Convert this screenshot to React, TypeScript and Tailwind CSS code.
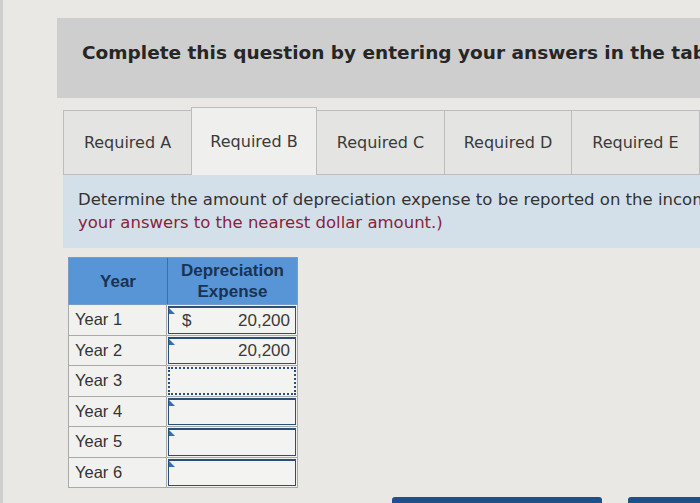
import React from "react";

const tabs = ["Required A", "Required B", "Required C", "Required D", "Required E"];
const tabWidths = ["w-[129px]", "w-[126px]", "w-[129px]", "w-[128px]", "w-[129px]"];

type Row = { year: string; value?: string; dollar?: boolean; focused?: boolean };

const rows: Row[] = [
  { year: "Year 1", value: "20,200", dollar: true },
  { year: "Year 2", value: "20,200" },
  { year: "Year 3", focused: true },
  { year: "Year 4" },
  { year: "Year 5" },
  { year: "Year 6" },
];

function Corner() {
  return (
    <span className="absolute left-0 top-0 h-0 w-0 border-l-[6px] border-t-[6px] border-l-[#2f6fb6] border-t-transparent" />
  );
}

export default function App() {
  return (
    <div className="relative flex h-[503px] w-[700px] flex-col overflow-hidden border-l-[3px] border-[#cfcfcd] bg-[#e9e8e5] font-['DejaVu_Sans',sans-serif]">
      {/* question header */}
      <div className="ml-[54px] mt-[18px] h-[80px] shrink-0 overflow-hidden whitespace-nowrap bg-[#cecece] pl-[25px] pt-[23px] text-[18.5px] font-bold leading-[24px] text-[#262626]">
        Complete this question by entering your answers in the tabs below.
      </div>

      {/* tabs */}
      <div className="ml-[60px] mt-[9px] flex h-[68px] shrink-0 items-end">
        {tabs.map((t, i) => (
          <div
            key={t}
            className={
              "flex shrink-0 items-center justify-center border border-[#bcbcbc] text-[16px] text-[#3a3a3a] " +
              tabWidths[i] +
              (i === 1
                ? " h-[68px] border-b-0 bg-[#efefed]"
                : " h-[65px] bg-[#e4e4e2]") +
              (i > 0 ? " -ml-px" : "")
            }
          >
            {t}
          </div>
        ))}
      </div>

      {/* instructions */}
      <div className="ml-[60px] h-[73px] shrink-0 overflow-hidden whitespace-nowrap bg-[#d3e0ea] pl-[15px] pt-[13px] text-[16.5px] leading-[23px] text-[#333333]">
        <div>
          Determine the amount of depreciation expense to be reported on the income statement each year.{" "}
          <span className="text-[#8a2239]">(Do not round intermediate calculations. Round</span>
        </div>
        <div className="text-[#8a2239]">your answers to the nearest dollar amount.)</div>
      </div>

      {/* table */}
      <div className="ml-[65px] mt-[9px] w-[230px] shrink-0 font-['Liberation_Sans',Arial,sans-serif]">
        <div className="flex h-[48px] border border-[#7a9cc4] bg-[#5795d6] text-[17px] font-bold leading-[21px] text-[#1b3253]">
          <div className="flex w-[99px] items-center justify-center border-r border-[#3f6f9f]">Year</div>
          <div className="flex flex-1 flex-col items-center justify-center">
            <span>Depreciation</span>
            <span>Expense</span>
          </div>
        </div>
        {rows.map((r) => (
          <div key={r.year} className="flex h-[30.5px]">
            <div className="flex w-[99px] items-center border-b border-l border-r border-[#a9a9a7] bg-[#f1f1ef] pl-[6px] text-[16.5px] text-[#343434]">
              {r.year}
            </div>
            <div className="flex flex-1 border-b border-r border-[#a9a9a7] bg-[#f1f1ef] p-px">
              <div
                className={
                  "relative flex flex-1 items-center justify-between px-[5px] text-[17px] text-[#3a3a3a] " +
                  (r.focused
                    ? "border-2 border-dotted border-[#2c4f78] bg-[#f3f3f1]"
                    : "border border-t-2 border-[#2c4f78] bg-[#f3f3f1]")
                }
              >
                {!r.focused && <Corner />}
                <span className="pl-[8px]">{r.dollar ? "$" : ""}</span>
                <span>{r.value ?? ""}</span>
              </div>
            </div>
          </div>
        ))}
      </div>

      {/* buttons peeking at bottom */}
      <div className="mt-[9px] flex gap-[26px] pl-[389px]">
        <div className="h-[10px] w-[210px] shrink-0 rounded-t-[3px] bg-[#1f4f8c]" />
        <div className="h-[10px] w-[90px] shrink-0 rounded-t-[3px] bg-[#1f4f8c]" />
      </div>
    </div>
  );
}
